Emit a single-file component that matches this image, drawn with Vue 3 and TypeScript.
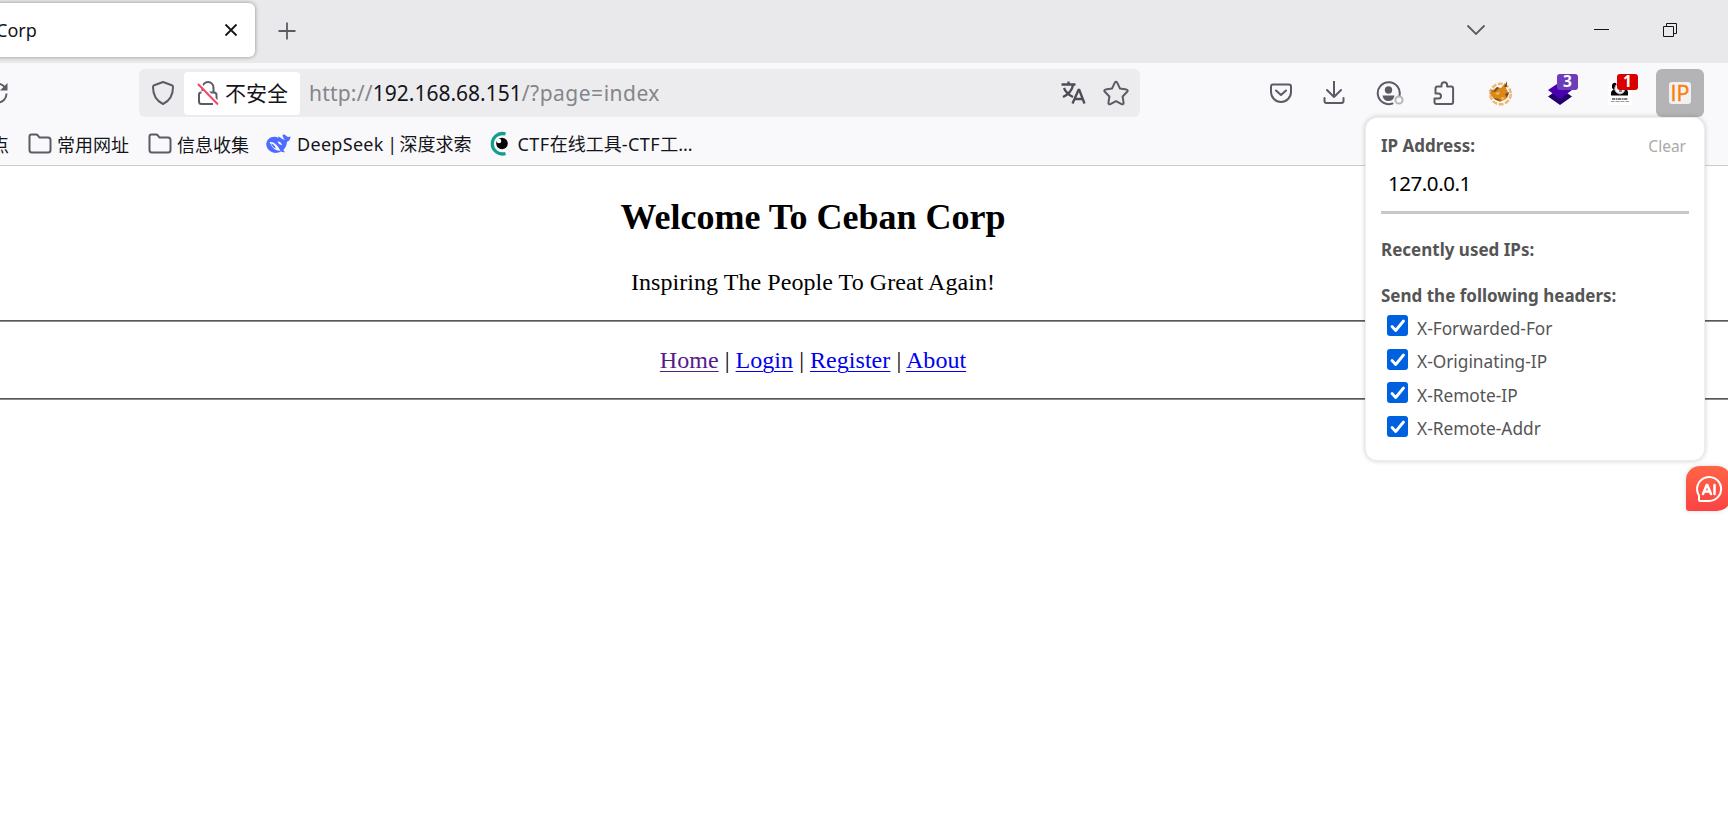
<script setup lang="ts">
import { ref } from 'vue'

interface HeaderOption {
  name: string
  enabled: boolean
}

const ipAddress = ref('127.0.0.1')
const headers = ref<HeaderOption[]>([
  { name: 'X-Forwarded-For', enabled: true },
  { name: 'X-Originating-IP', enabled: true },
  { name: 'X-Remote-IP', enabled: true },
  { name: 'X-Remote-Addr', enabled: true },
])
</script>

<template>
  <div class="window">
    <header class="tabs">
      <div class="tab">
        <span class="tab-title">Corp</span>
        <svg class="tab-close" width="14" height="14" viewBox="0 0 14 14"><path d="M1.500 1.500l11 11M12.500 1.500l-11 11" /></svg>
      </div>
      <svg class="plus" width="18" height="18" viewBox="0 0 18 18"><path d="M9 .5v17M.5 9h17" /></svg>
      <div class="window-controls">
        <svg width="20" height="12" viewBox="0 0 20 12" class="chev"><path d="M1.500 1.500L10 10l8.500-8.500" /></svg>
        <svg width="15" height="14" viewBox="0 0 15 14" class="min"><path d="M0 6.500h15" /></svg>
        <svg width="14" height="14" viewBox="0 0 14 14" class="restore"><path d="M.5 3.500h10v10h-10zM3.500 3.500v-3h10v10h-3" /></svg>
      </div>
    </header>

    <div class="toolbar">
      <svg class="reload" width="8" height="24" viewBox="0 0 8 24">
        <path class="ln" d="M-6 4.500C-2 1.500 2 3 5 6.500M6.500 12.500C6.500 17.500 3 21-2 21.500" />
        <path d="M7.500 2v7.500H0z" class="fl" />
      </svg>
      <div class="urlbar">
        <svg class="shield" width="24" height="26" viewBox="0 0 24 26"><path d="M12 2L3.200 5.200Q2 5.700 2 7c0 8 3 13.700 10 17 7-3.300 10-9 10-17q0-1.300-1.200-1.800z" /></svg>
        <div class="identity">
          <svg width="22" height="26" viewBox="0 0 22 26" class="lock">
            <path class="ln" d="M5.500 11V7.500a5.500 5.500 0 0 1 11 0V12M4.500 12.500h-.500a2 2 0 0 0-2 2v7q0 2.500 2.500 2.500H16M12 12.500h5q2.500 0 2.500 2.500v5" />
            <path class="gap" d="M2.500 3.500L22 24" />
            <path class="slash" d="M1 4l20 20.500" />
          </svg>
          <span>不安全</span>
        </div>
        <div class="url"><span class="scheme">http://</span><b>192.168.68.151</b><span class="path">/?page=index</span></div>
        <svg class="translate" width="26" height="26" viewBox="0 0 26 26"><path d="M1.500 4.500h14M8.500 1.500v3M4 8c1.500 4 5 7 9 9M13 5C12 11 8 14.500 3 17M12.500 23.500L18.500 10h.8l5.200 13.500M14.500 19h8.500" /></svg>
        <svg class="star" width="26" height="26" viewBox="0 0 26 26"><path d="M11.800 2.600q1.200-1.600 2.400 0L17 8.600l6.500 1q2 .6.700 2.200L19.600 16.500l1 6.300q0 2-2 1.300L13 21.200l-5.600 2.900q-2 .7-2-1.300l1-6.300L1.800 11.800q-1.300-1.600.7-2.200l6.500-1z" /></svg>
      </div>
      <div class="actions">
        <svg width="24" height="24" viewBox="0 0 24 24" class="ic"><path d="M4 3.500h16q2 0 2 2V11a10 10 0 0 1-20 0V5.500q0-2 2-2zM7 9.500l5 4.500 5-4.500" /></svg>
        <svg width="24" height="24" viewBox="0 0 24 24" class="ic"><path d="M12 0v16M5 9l7 7 7-7M2.500 17v3q0 2 2 2h15q2 0 2-2v-3" /></svg>
        <svg width="28" height="26" viewBox="0 0 28 26" class="ic account">
          <path d="M16.500 23.500A11 11 0 1 1 23.500 15.500" />
          <circle class="solid" cx="12.500" cy="10" r="3.700" />
          <path class="solid" d="M6.500 15.500h12q-1 5.500-6 5.500t-6-5.500z" />
          <circle class="status" cx="23" cy="20" r="3.600" />
        </svg>
        <svg width="24" height="26" viewBox="0 0 24 26" class="ic"><path d="M3.500 13.500V8.500q0-2 2-2h4V5a2.800 2.800 0 0 1 5.600 0v1.500h4q2 0 2 2V22q0 2-2 2H4.500q-2 0-2-2v-3.500h4a2.500 2.500 0 0 0 0-5z" /></svg>
        <svg width="26" height="26" viewBox="0 0 26 26" class="fox">
          <circle cx="13.500" cy="14" r="10.300" fill="none" stroke="#ecba78" stroke-width="2.500" stroke-dasharray="5 1.500" />
          <path d="M4 11l6-4 4 1 4-5 1 5 3 6-3 5-6 3-6-3-4-5z" fill="#dd8718" />
          <path d="M1 10l6 1 3-4 2 1-4 4zM17 7l3-6v6zM18 14l4-2-2 6zM7 18l5 1 2 2-5-1z" fill="#655238" />
          <path d="M8 13l5-1-2 3zM14 17l4 1-3 2z" fill="#f6c067" />
        </svg>
        <div class="extension">
          <svg width="26" height="26" viewBox="0 0 26 26"><path d="M1 16.500L13 8l12 8.500L13 25z" fill="#25006e" /><path d="M1 10l12-8 12 8-12 9z" fill="#4b00b0" /></svg>
          <span class="badge violet">3</span>
        </div>
        <div class="extension">
          <svg width="24" height="24" viewBox="0 0 24 24">
            <path fill="#fff" d="M0 0h24v24H0z" />
            <path fill="#050505" d="M4 4q1-3 4-2l1 3-3 4-2-2zM3 14.500v-3q1-3 4-3 1 4 5 5 4-1 5-5 3 0 3 3v3z" />
            <path d="M8 4c-3 5 0 8.500 4 8.500s6-3.500 4-8.500" fill="#fff" stroke="#aaa" />
            <path d="M11 10h3M13 6.500l3 1" stroke="#555" stroke-width="1.500" />
            <path d="M4 18h16" stroke="#555" stroke-width="1.500" stroke-dasharray="3 .6 2 .4" />
            <path d="M3 20.500h18" stroke="#999" stroke-dasharray="3 .5 1 .5" />
          </svg>
          <span class="badge red">1</span>
        </div>
        <div class="ip-button"><span class="ip-icon">IP</span></div>
      </div>
    </div>

    <nav class="bookmarks">
      <span class="bm first">点</span>
      <span class="bm folder"><svg width="24" height="21" viewBox="0 0 24 21"><path d="M1.500 17V3.500q0-2 2-2h4.500q1 0 1.800.8L11.500 4.500H20q2.500 0 2.500 2.500V17q0 2.500-2.500 2.500H4q-2.500 0-2.500-2.500z" /></svg><span>常用网址</span></span>
      <span class="bm folder second"><svg width="24" height="21" viewBox="0 0 24 21"><path d="M1.500 17V3.500q0-2 2-2h4.500q1 0 1.800.8L11.500 4.500H20q2.500 0 2.500 2.500V17q0 2.500-2.500 2.500H4q-2.500 0-2.500-2.500z" /></svg><span>信息收集</span></span>
      <span class="bm deepseek">
        <svg width="25" height="20" viewBox="0 0 25 20">
          <path fill="#4d6bfe" d="M24.500 2.500c-2 .8-3 .2-4.200-.6C19 1 18 0 16.500 1c.2 2.500 1 3.500 2.700 4.800-2-.2-3.500-1-5.200-2.500C12.500 2 12 2.500 12.800 4 7 .500 0 4.500.3 10.500.6 16 6 19.500 11 18.800c2-.2 3-.8 4-1.200 1.500.8 3 1 4 .4-1-.8-1.300-1.500-1.700-2 2.700-2.800 3.500-5.500 3.700-8.300 2.500-.5 3.500-2.700 3.500-5.200z" />
          <path fill="#f9f9fb" d="M3.500 8c4-.7 7 2 9 5.500.9 1.500 1.500 2.500 2 3-3 .9-7-1.500-8.500-4C5 11 4.500 9.500 3.500 8zM11.500 7.500c2-.5 4 1.500 4.500 3.500-1.500.2-3.500-1-4.500-3.500z" />
          <path fill="#4d6bfe" d="M5 9.500c3 .5 4 3 5 5-2 0-4-2.500-5-5z" />
        </svg>
        <span><span class="latin ds">DeepSeek</span><span class="latin bar"> | </span>深度求索</span>
      </span>
      <span class="bm ctf">
        <svg width="22" height="25" viewBox="0 0 22 25">
          <path d="M17.500 3A10.200 10.200 0 1 0 17.500 22.500" fill="none" stroke="#159c90" stroke-width="3.300" />
          <circle cx="14" cy="12.500" r="5.800" fill="#050505" />
          <circle cx="11" cy="10" r="2.300" fill="#fff" />
        </svg>
        <span><span class="latin wide">CTF</span>在线工具<span class="latin wide">-CTF</span>工<span class="latin">...</span></span>
      </span>
    </nav>

    <main class="page">
      <h2>Welcome To Ceban Corp</h2>
      <p class="slogan">Inspiring The People To Great Again!</p>
      <hr />
      <p class="links"><a class="visited">Home</a> | <a>Login</a> | <a>Register</a> | <a>About</a></p>
      <hr />
    </main>

    <section class="popup">
      <div class="popup-head"><strong>IP Address:</strong><span class="clear">Clear</span></div>
      <div class="ip-input">{{ ipAddress }}</div>
      <strong class="recent">Recently used IPs:</strong>
      <strong class="send">Send the following headers:</strong>
      <ul>
        <li v-for="header in headers" :key="header.name">
          <span class="check"><svg v-if="header.enabled" width="21" height="21" viewBox="0 0 21 21"><path d="M5 11.500l3.700 4L16.500 6" /></svg></span>
          {{ header.name }}
        </li>
      </ul>
    </section>

    <div class="assistant">
      <svg width="28" height="28" viewBox="0 0 28 28"><path d="M4 25v-4.500A12 12 0 1 1 14 26H5q-1 0-1-1z" /><path class="letters" d="M8 19l3.700-9h.6l3.700 9M9.500 16.500h5M19.500 10v9" /></svg>
    </div>
  </div>
</template>

<style>
html,
body {
  margin: 0;
  overflow: hidden;
  background: #fff;
}
</style>

<style scoped>
.window {
  position: relative;
  width: 1728px;
  height: 835px;
  overflow: hidden;
  background: #fff;
  font-family: "Noto Sans", "Noto Sans CJK SC", sans-serif;
  color: #15141a;
}
svg {
  display: block;
  flex: none;
  fill: none;
}
.tabs {
  display: flex;
  align-items: center;
  height: 63px;
  background: #e9e9eb;
}
.tab {
  display: flex;
  align-items: center;
  justify-content: space-between;
  box-sizing: border-box;
  width: 261px;
  height: 54px;
  margin: 0 0 3px -6px;
  padding-right: 17px;
  background: #fff;
  border-radius: 6px;
  box-shadow: 0 0 4px rgba(0, 0, 0, 0.4);
}
.tab-title {
  font-size: 18px;
  margin-left: 2px;
}
.tab-close {
  stroke: #15141a;
  stroke-width: 1.8;
}
.plus {
  margin: 0 0 1px 23px;
  stroke: #5b5b66;
  stroke-width: 1.8;
}
.window-controls {
  display: flex;
  align-items: center;
  margin: 0 51px 4px auto;
  stroke: #15141a;
}
.chev {
  stroke: #5b5b66;
  stroke-width: 1.8;
  margin-right: 108px;
}
.min {
  margin-right: 54px;
}
.toolbar {
  display: flex;
  align-items: center;
  height: 60px;
  background: #f9f9fb;
}
.reload .ln {
  stroke: #5b5b66;
  stroke-width: 2;
}
.reload .fl {
  fill: #5b5b66;
}
.urlbar {
  display: flex;
  align-items: center;
  box-sizing: border-box;
  width: 1001px;
  height: 48px;
  margin-left: 131px;
  padding: 0 11px 0 12px;
  background: #ececee;
  border-radius: 6px;
}
.shield,
.star,
.lock .ln {
  stroke: #5b5b66;
  stroke-width: 2;
  stroke-linejoin: round;
}
.identity {
  display: flex;
  align-items: center;
  box-sizing: border-box;
  width: 116px;
  height: 43px;
  margin-left: 9px;
  padding-left: 13px;
  gap: 6px;
  background: #fff;
  border-radius: 4px;
  font: 21px "Noto Sans CJK SC", sans-serif;
  white-space: nowrap;
}
.identity span {
  margin-bottom: 2px;
}
.lock .gap {
  stroke: #fff;
  stroke-width: 3;
}
.lock .slash {
  stroke: #f0486a;
  stroke-width: 2;
}
.url {
  flex: 1;
  margin: 0 0 1px 9px;
  font-size: 21px;
  line-height: 30px;
  color: #858589;
}
.url .scheme {
  letter-spacing: 0.2px;
}
.url b {
  font-weight: 400;
  color: #15141a;
}
.url .path {
  letter-spacing: 0.5px;
}
.translate {
  margin-right: 17px;
  stroke: #4c4c54;
  stroke-width: 2.3;
}
.actions {
  display: grid;
  grid-template-columns: 53px 54px 55px 56px 56px 64px 56px 64px;
  align-items: center;
  justify-items: center;
  margin-left: auto;
  margin-right: 16px;
}
.ic {
  stroke: #5b5b66;
  stroke-width: 2;
  stroke-linecap: round;
  stroke-linejoin: round;
}
.account {
  margin-left: 3px;
}
.ic .solid {
  fill: #5b5b66;
  stroke: none;
}
.ic .status {
  stroke: #b5b5bc;
}
.extension {
  position: relative;
}
.badge {
  position: absolute;
  top: -7px;
  left: 9px;
  width: 21px;
  height: 16px;
  border-radius: 3px;
  color: #fff;
  font-size: 15.500px;
  font-weight: 700;
  line-height: 15px;
  text-align: center;
}
.violet {
  left: 10px;
  top: -6px;
  background: #6b3dba;
}
.red {
  background: #d90000;
}
.ip-button {
  display: grid;
  place-items: center;
  width: 48px;
  height: 48px;
  background: #b4b4b6;
  border-radius: 6px;
}
.ip-icon {
  width: 22px;
  height: 22px;
  border-radius: 3px;
  background: #f1f1f1;
  color: #fc7d0b;
  font: 21.500px/22px "Open Sans", sans-serif;
  text-align: center;
  -webkit-text-stroke: 0.4px #fc7d0b;
}
.bookmarks {
  display: flex;
  align-items: center;
  box-sizing: border-box;
  height: 43px;
  border-bottom: 1px solid #ccccce;
  background: #f9f9fb;
}
.bm {
  display: flex;
  align-items: center;
  margin-top: -1px;
  font: 18px/28px "Noto Sans CJK SC", sans-serif;
  white-space: pre;
}
.first {
  margin-left: -9px;
}
.folder {
  margin-left: 19px;
  gap: 5px;
}
.folder svg {
  stroke: #5b5b66;
  stroke-width: 2;
}
.latin {
  font-family: "Noto Sans", sans-serif;
  font-size: 18px;
}
.wide {
  letter-spacing: 0.5px;
}
.ds {
  letter-spacing: 0.3px;
}
.bar {
  letter-spacing: -1.2px;
}
.deepseek {
  margin-left: 17px;
}
.deepseek svg {
  margin-right: 6px;
}
.ctf {
  margin-left: 17px;
}
.ctf svg {
  margin-right: 7px;
}
.page {
  width: 1830px;
  margin-left: -102px;
  font-family: "Liberation Serif", serif;
  font-size: 24px;
  line-height: 27px;
  text-align: center;
  color: #000;
}
.page h2 {
  margin: 0;
  padding-top: 31px;
  font-size: 36px;
  line-height: 41px;
}
.slogan {
  margin: 31px 0 24px;
  letter-spacing: 0.06px;
}
.page hr {
  height: 1px;
  margin: 0;
  border: 0;
  border-top: 1px solid #58585a;
  background: #8b8b8c;
}
.links {
  margin: 25px 0 24px;
  height: 27px;
  letter-spacing: 0.04px;
}
.links a {
  color: #0000ee;
  text-decoration: underline;
  text-decoration-thickness: 1px;
  text-underline-offset: 3px;
}
.links .visited {
  color: #551a8b;
}
.popup {
  position: absolute;
  left: 1365px;
  top: 117px;
  display: flex;
  flex-direction: column;
  box-sizing: border-box;
  width: 340px;
  height: 344px;
  padding: 14px 15px 0;
  background: #fff;
  border: 1px solid #ededf0;
  border-radius: 12px;
  box-shadow: 0 0 5px rgba(0, 0, 0, 0.2);
  font-size: 17px;
  line-height: 28px;
  color: #555;
}
.popup-head {
  display: flex;
  justify-content: space-between;
  height: 28px;
}
.clear {
  padding-right: 3px;
  font-size: 15.500px;
  color: #aaa;
}
.ip-input {
  box-sizing: border-box;
  height: 54px;
  padding: 9px 7px 0;
  border-bottom: 3px solid #c8c8c8;
  font-size: 20.500px;
  letter-spacing: -0.450px;
  line-height: 28px;
  color: #000;
}
.recent {
  margin-top: 22px;
}
.send {
  margin-top: 18px;
}
.popup ul {
  margin: 2px 0 0;
  padding: 0;
  list-style: none;
}
.popup li {
  display: flex;
  align-items: center;
  height: 33.500px;
  padding-left: 6px;
  gap: 9px;
  font-size: 17.300px;
}
.check {
  width: 21px;
  height: 21px;
  margin-bottom: 6px;
  border-radius: 3px;
  background: #0061e0;
}
.check svg {
  stroke: #fff;
  stroke-width: 2.800;
  stroke-linecap: round;
  stroke-linejoin: round;
}
.assistant {
  position: absolute;
  left: 1686px;
  top: 466px;
  display: flex;
  align-items: center;
  box-sizing: border-box;
  width: 45px;
  height: 45px;
  padding-left: 9px;
  border-radius: 14px 14px 14px 3px;
  background: linear-gradient(#ff6546, #fb4343);
  box-shadow: 0 0 4px rgba(0, 0, 0, 0.15);
}
.assistant svg {
  stroke: #fff;
  stroke-width: 2;
  stroke-linejoin: round;
}
.assistant .letters {
  stroke-width: 2.500;
  stroke-linecap: round;
}
</style>
